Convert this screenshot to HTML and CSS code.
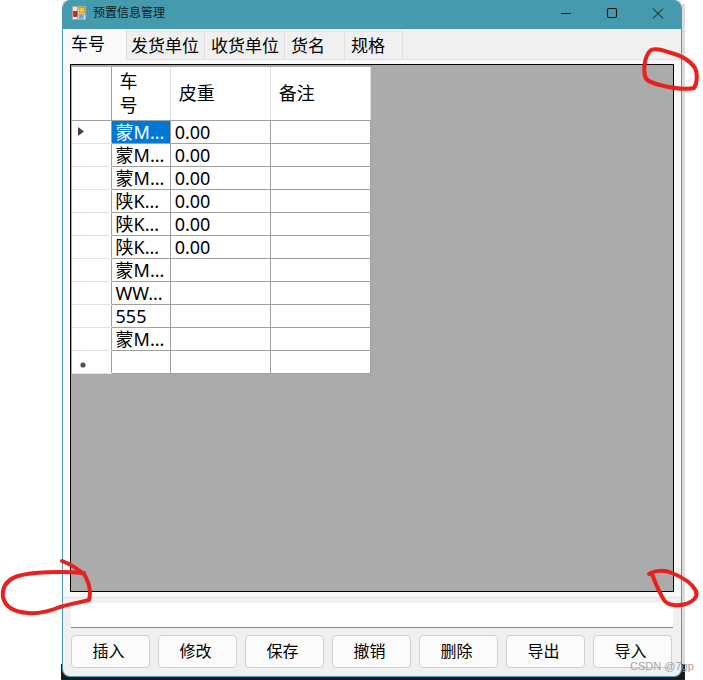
FILE: index.html
```html
<!DOCTYPE html>
<html lang="zh">
<head>
<meta charset="utf-8">
<title>预置信息管理</title>
<link rel="stylesheet" href="styles.css">
</head>
<body>
<div class="backdrop"></div>
<div class="shadow"></div>
<div class="window">
  <header class="titlebar">
    <svg class="app-icon" width="14" height="14" viewBox="0 0 14 14">
      <rect x="0.5" y="0.5" width="13" height="13" fill="#e4e8e4" stroke="#a8a8a0"/>
      <path d="M5.5 1V13M1 5.5H6M6 8.5H13" stroke="#a8a8a0" fill="none"/>
      <rect x="1.5" y="5.5" width="3.5" height="5" fill="#cf2a22" stroke="#7a2a20" stroke-width="0.6"/>
      <rect x="7" y="1.5" width="5.5" height="5.5" fill="#f6c62a" stroke="#b88f20" stroke-width="0.8"/>
      <rect x="7" y="9" width="4.5" height="3.5" fill="#6c9be8" stroke="#8fb0e0" stroke-width="0.6"/>
    </svg>
    <span class="title">预置信息管理</span>
    <div class="controls">
      <svg class="ctl" width="46" height="29" viewBox="0 0 46 29"><path d="M18 13.5H28" stroke="#111" fill="none"/></svg>
      <svg class="ctl" width="46" height="29" viewBox="0 0 46 29"><rect x="18.5" y="8.5" width="9" height="9" rx="1.5" stroke="#111" stroke-width="1.1" fill="none"/></svg>
      <svg class="ctl" width="46" height="29" viewBox="0 0 46 29"><path d="M18 8.5L28 18.5M28 8.5L18 18.5" stroke="#111" fill="none"/></svg>
    </div>
  </header>
  <div class="body">
    <nav class="tabs">
      <span class="tab active">车号</span>
      <span class="tab w78">发货单位</span>
      <span class="tab w80">收货单位</span>
      <span class="tab w60">货名</span>
      <span class="tab w58">规格</span>
    </nav>
    <section class="page">
      <div class="grid">
        <table>
          <colgroup><col class="c0"><col class="c1"><col class="c2"><col class="c3"></colgroup>
          <thead>
            <tr><th class="rh"></th><th class="narrow">车<br>号</th><th>皮重</th><th>备注</th></tr>
          </thead>
          <tbody>
            <tr><td class="rh"><svg width="6" height="9" viewBox="0 0 6 9"><path d="M0 0L6 4.5L0 9Z" fill="#444"/></svg></td><td class="sel">蒙M...</td><td>0.00</td><td></td></tr>
            <tr><td class="rh"></td><td>蒙M...</td><td>0.00</td><td></td></tr>
            <tr><td class="rh"></td><td>蒙M...</td><td>0.00</td><td></td></tr>
            <tr><td class="rh"></td><td>陕K...</td><td>0.00</td><td></td></tr>
            <tr><td class="rh"></td><td>陕K...</td><td>0.00</td><td></td></tr>
            <tr><td class="rh"></td><td>陕K...</td><td>0.00</td><td></td></tr>
            <tr><td class="rh"></td><td>蒙M...</td><td></td><td></td></tr>
            <tr><td class="rh"></td><td>WW...</td><td></td><td></td></tr>
            <tr><td class="rh"></td><td>555</td><td></td><td></td></tr>
            <tr><td class="rh"></td><td>蒙M...</td><td></td><td></td></tr>
            <tr><td class="rh"><svg class="star" width="6" height="6" viewBox="0 0 6 6"><circle cx="3" cy="3" r="2.6" fill="#555"/></svg></td><td></td><td></td><td></td></tr>
          </tbody>
        </table>
      </div>
    </section>
    <div class="input"></div>
    <div class="buttons">
      <button class="btn">插入</button>
      <button class="btn">修改</button>
      <button class="btn">保存</button>
      <button class="btn">撤销</button>
      <button class="btn">删除</button>
      <button class="btn">导出</button>
      <button class="btn">导入</button>
    </div>
  </div>
</div>
<span class="watermark">CSDN @7gp</span>
<svg class="ink" width="703" height="680" viewBox="0 0 703 680">
  <path d="M651 50C656 48 663 50 668 52C680 55 690 60 695 68C698 74 697 84 694 88C685 90 672 88 660 85C652 83 646 81 645 76C643 68 645 55 651 50Z"/>
  <path d="M62 561C70 564 79 570 84 574C89 582 91 592 89 600C80 602 70 604 60 607C50 611 40 614 28 613C15 612 5 607 3 597C2 588 6 580 18 576C32 572 60 571 84 573"/>
  <path d="M649 574C655 570 665 570 672 573C682 577 692 583 696 591C698 597 694 601 686 604C678 606 668 606 664 600C659 592 655 582 652 574"/>
</svg>
</body>
</html>
```
FILE: styles.css
```css
html, body { margin: 0; padding: 0; }
body {
  position: relative;
  width: 703px;
  height: 680px;
  overflow: hidden;
  background: #fff;
  font-family: "Noto Sans", "Noto Sans CJK SC", sans-serif;
  color: #000;
}
.backdrop { position: absolute; left: 61px; top: 664px; width: 624px; height: 16px; background: #1c1c1c; }
.shadow { position: absolute; left: 682px; top: 4px; width: 3px; height: 660px; background: #dcdcdc; }

.window {
  position: relative;
  box-sizing: border-box;
  margin-left: 62px;
  width: 620px;
  height: 677px;
  border: 1px solid #4a9bb0;
  border-top: 0;
  border-radius: 8px;
  background: #f0f0f0;
  overflow: hidden;
  display: flex;
  flex-direction: column;
}
.titlebar {
  flex: none;
  height: 29px;
  background: #459aae;
  display: flex;
  align-items: center;
  padding-left: 9px;
}
.app-icon { flex: none; margin-bottom: 3px; }
.title { margin-left: 7px; font-size: 12px; line-height: 26px; margin-bottom: 5px; color: #0c1a1e; font-family: "Noto Sans CJK SC", sans-serif; }
.controls { margin-left: auto; display: flex; margin-right: 0; }
.ctl { display: block; }

.body { flex: 1; display: flex; flex-direction: column; min-height: 0; }

.tabs { flex: none; height: 31px; display: flex; align-items: flex-end; border-bottom: 1px solid #dfdfdf; box-sizing: border-box; }
.tab {
  box-sizing: border-box;
  height: 28px;
  padding-left: 6px;
  font-size: 17px;
  line-height: 26px;
  text-align: left;
  font-family: "Noto Sans CJK SC", sans-serif;
  border-right: 1px solid #dfdfdf;
  border-top: 1px solid #e6e6e6;
  white-space: nowrap;
}
.tab.active { width: 64px; height: 31px; line-height: 27px; background: #f9f9f9; border-top: 0; margin-bottom: -1px; padding-left: 8px; padding-bottom: 3px; }
.w78 { width: 78px; padding-left: 4px; }
.w80 { width: 80px; }
.w60 { width: 60px; }
.w58 { width: 58px; }

.page { flex: none; height: 538px; box-sizing: border-box; background: #f9f9f9; border-bottom: 1px solid #e4e4e4; padding: 4px 7px 0 7px; }
.grid { box-sizing: border-box; height: 528px; border: 1px solid #000; background: #ababab; padding-top: 1px; padding-left: 1px; width: 604px; }

table { border-collapse: collapse; table-layout: fixed; width: 299px; margin-top: 1px; font-family: "Noto Sans", "Noto Sans CJK SC", sans-serif; }
.c0 { width: 39px; }
.c1 { width: 59px; }
.c2 { width: 100px; }
.c3 { width: 100px; }
th {
  height: 53px;
  box-sizing: border-box;
  padding: 0 0 3px 8px;
  background: #fff;
  font-size: 18px;
  font-weight: 400;
  line-height: 24px;
  text-align: left;
  font-family: "Noto Sans CJK SC", sans-serif;
  border-right: 1px solid #e0e0e0;
  border-bottom: 1px solid #a0a0a0;
}
th.narrow { border-right: 1px solid #e0e0e0; }
td {
  height: 23px;
  box-sizing: border-box;
  padding: 1px 0 0 4px;
  background: #fff;
  font-size: 18px;
  line-height: 21px;
  white-space: nowrap;
  overflow: hidden;
  border-right: 1px solid #a0a0a0;
  border-bottom: 1px solid #a0a0a0;
}
th.rh { padding: 0; border-right: 1px solid #a0a0a0; }
td.rh { padding: 0 0 0 6px; border-right: 1px solid #a0a0a0; border-bottom: 1px solid #e2e2e2; }
td.rh svg { display: block; }
td.rh .star { margin: 6px 0 0 2px; }
td.sel { background: #0078d7; color: #fff; }

.input { flex: none; margin: 5px 8px 0 8px; height: 25px; box-sizing: border-box; background: #fff; border-bottom: 1px solid #8a8a8a; }
.buttons { flex: none; display: flex; gap: 8px; margin: 7px 0 0 8px; }
.btn {
  width: 79px;
  height: 33px;
  box-sizing: border-box;
  padding: 0 4px 4px 0;
  font-family: "Noto Sans CJK SC", sans-serif;
  font-size: 16px;
  color: #000;
  background: #fbfbfb;
  border: 1px solid #d0d0d0;
  border-radius: 4px;
}

.watermark { position: absolute; left: 630px; top: 659px; font-size: 11px; line-height: 14px; color: #9a9a9a; font-family: "Liberation Sans", sans-serif; white-space: nowrap; opacity: .9; }
.ink { position: absolute; left: 0; top: 0; pointer-events: none; }
.ink path { fill: none; stroke: #e8211f; stroke-width: 4; stroke-linecap: round; stroke-linejoin: round; }
```
